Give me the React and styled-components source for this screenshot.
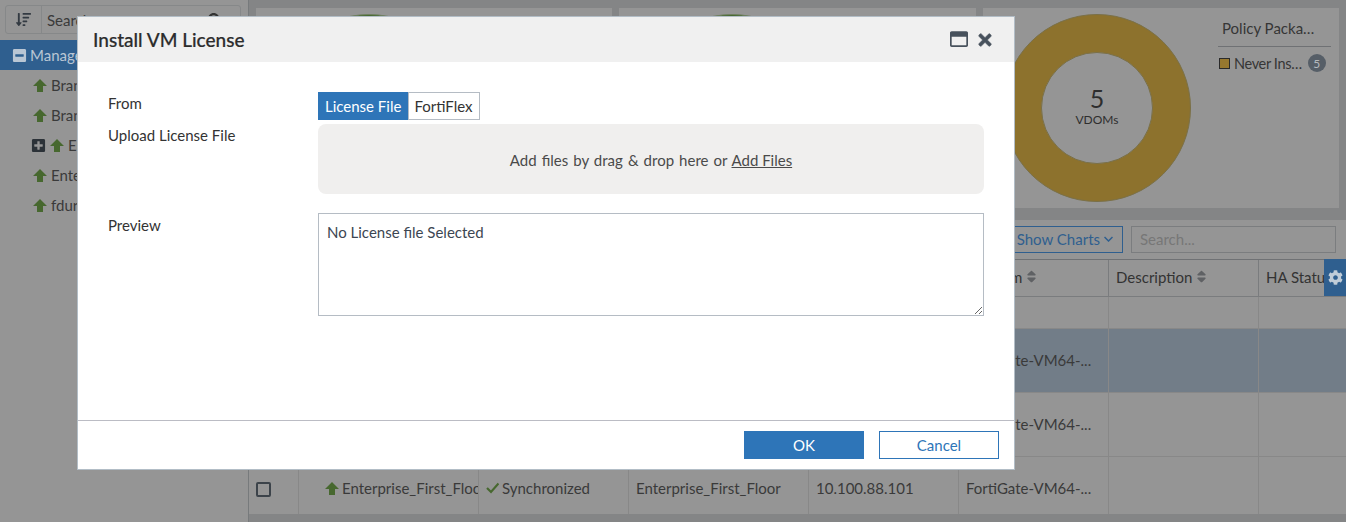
import React from 'react';
import styled, { createGlobalStyle } from 'styled-components';
import {
    FaCog, FaMinusSquare, FaPlusSquare, FaRegWindowMaximize,
    FaSearch, FaSort, FaSortAmountDown, FaTimes,
} from 'react-icons/fa';

const GlobalStyle = createGlobalStyle`
    html, body { margin: 0; height: 100%; overflow: hidden; }
    body { font-family: Lato, "Noto Sans", sans-serif; font-size: 15px; color: #333; background: #848586; }
    * { box-sizing: border-box; }
`;

const Page = styled.div`
    position: relative;
    width: 1346px;
    height: 522px;
    overflow: hidden;
    display: grid;
    grid-template-columns: 248px 1fr;
    background: #848586;
`;

const Sidebar = styled.aside`
    background: #959595;
    border-right: 1px solid #777a7c;
    width: 249px;
    padding-top: 5px;
`;

const SearchBar = styled.div`
    display: flex;
    height: 29px;
    margin: 0 7px 6px 5px;
    border: 1px solid #868889;
    border-radius: 3px;
`;

const SortButton = styled.div`
    width: 36px;
    display: flex;
    align-items: center;
    justify-content: center;
    border-right: 1px solid #868889;
    color: #333a42;
    font-size: 15px;
`;

const SearchInput = styled.div`
    flex: 1;
    display: flex;
    align-items: center;
    justify-content: space-between;
    padding: 0 18px 0 5px;
    color: #3a3a3a;
    svg { font-size: 14px; color: #333; }
`;

const TreeRow = styled.div`
    height: 30px;
    display: flex;
    align-items: center;
    gap: 4px;
    white-space: nowrap;
    padding-left: ${(p) => p.$indent}px;
    background: ${(p) => (p.$selected ? '#2f5f8f' : 'transparent')};
    color: ${(p) => (p.$selected ? '#b9c6d4' : '#3a3a3a')};
`;

const ArrowSvg = styled.svg`
    flex: none;
    fill: #47682f;
`;

const Toggle = styled.span`
    display: flex;
    font-size: 15px;
    margin-right: ${(p) => (p.$light ? -1 : 0)}px;
    color: ${(p) => (p.$light ? '#b9c6d4' : '#2c3238')};
`;

const Main = styled.main`
    display: flex;
    flex-direction: column;
    min-width: 0;
    padding-left: 1px;
`;

const Charts = styled.div`
    display: grid;
    grid-template-columns: 356px 357px 356px;
    gap: 7px;
    height: 208px;
    padding: 8px 0 0 7px;
`;

const ChartCard = styled.section`
    position: relative;
    background: #959595;
    overflow: hidden;
`;

const Donut = styled.div`
    position: absolute;
    left: ${(p) => p.$center - 94}px;
    top: 6px;
    width: 188px;
    height: 188px;
    border-radius: 50%;
    background: ${(p) => p.$color};
    border: 1px solid ${(p) => p.$edge};
`;

const DonutHole = styled.div`
    position: absolute;
    left: 37px;
    top: 37px;
    width: 112px;
    height: 112px;
    padding-bottom: 7px;
    border-radius: 50%;
    background: #959595;
    border: 1px solid #7a7048;
    display: flex;
    flex-direction: column;
    align-items: center;
    justify-content: center;
    color: #2e2e2e;
`;

const DonutValue = styled.div`
    font-size: 25px;
    line-height: 30px;
`;

const DonutLabel = styled.div`
    font-size: 12px;
    line-height: 14px;
`;

const Legend = styled.div`
    position: absolute;
    left: 235px;
    top: 8px;
    width: 113px;
`;

const LegendTitle = styled.div`
    height: 31px;
    padding-left: 4px;
    line-height: 24px;
    border-bottom: 1px solid #6f7174;
    color: #363636;
    white-space: nowrap;
`;

const LegendRow = styled.div`
    display: flex;
    align-items: center;
    height: 32px;
    padding-left: 1px;
    font-size: 14.5px;
    letter-spacing: -0.35px;
    color: #363636;
    white-space: nowrap;
`;

const Swatch = styled.span`
    width: 11px;
    height: 11px;
    margin-right: 4px;
    background: #97782f;
    border: 1px solid #2a2a2a;
`;

const Badge = styled.span`
    width: 18px;
    height: 18px;
    margin-left: 6px;
    border-radius: 50%;
    background: #565e67;
    color: #b5b9bd;
    font-size: 12px;
    display: flex;
    align-items: center;
    justify-content: center;
`;

const Toolbar = styled.div`
    display: flex;
    justify-content: flex-end;
    align-items: center;
    gap: 8px;
    height: 39px;
    margin-top: 12px;
    padding: 0 10px 1px 0;
    background: #959595;
`;

const ChartsButton = styled.div`
    display: flex;
    align-items: center;
    gap: 4px;
    height: 27px;
    padding: 0 9px 0 80px;
    border: 1px solid #2f5f8f;
    color: #2f5f8f;
`;

const Chevron = styled.svg`
    flex: none;
    fill: none;
    stroke: #2f5f8f;
    stroke-width: 1.5;
`;

const ToolbarSearch = styled.div`
    width: 205px;
    height: 27px;
    padding: 0 8px;
    line-height: 24px;
    border: 1px solid #7b7d7f;
    color: #777;
`;

const TableWrap = styled.div`
    position: relative;
    height: 255px;
    overflow: hidden;
`;

const Row = styled.div`
    display: grid;
    grid-template-columns: 50px 180px 150px 180px 150px 150px 150px 150px;
    height: ${(p) => p.$height}px;
    background: ${(p) => (p.$selected ? '#727d88' : '#959595')};
    border-bottom: 1px solid ${(p) => (p.$head ? '#7a7c7e' : '#888')};
    border-top: ${(p) => (p.$head ? '1px solid #6f7174' : '0')};
`;

const Cell = styled.div`
    display: flex;
    align-items: center;
    gap: 3px;
    min-width: 0;
    overflow: hidden;
    white-space: nowrap;
    padding-left: ${(p) => p.$pad ?? 7}px;
    padding-bottom: ${(p) => (p.$head ? 3 : 1)}px;
    border-right: 1px solid ${(p) => (p.$head ? '#7a7c7e' : '#888')};
    color: ${(p) => (p.$head ? '#333' : '#3a3a3a')};
`;

const SortCaret = styled(FaSort)`
    margin-left: -1px;
    flex: none;
    font-size: 15px;
    color: #5f6164;
`;

const CheckBox = styled.span`
    width: 15px;
    height: 15px;
    margin-top: 3px;
    border: 2px solid #3c434a;
    border-radius: 2px;
`;

const SyncCheck = styled.svg`
    flex: none;
    fill: none;
    stroke: #47682f;
    stroke-width: 2.2;
`;

const GearButton = styled.div`
    position: absolute;
    right: 0;
    top: 0;
    width: 22px;
    height: 37px;
    background: #2f5f8f;
    color: #c0ccd8;
    display: flex;
    align-items: center;
    justify-content: center;
    font-size: 15px;
`;

const Dialog = styled.div`
    position: absolute;
    left: 77px;
    top: 16px;
    width: 938px;
    height: 454px;
    background: #fff;
    border: 1px solid #b2bdc6;
    display: flex;
    flex-direction: column;
`;

const DialogHead = styled.header`
    height: 45px;
    flex: none;
    display: flex;
    align-items: center;
    justify-content: space-between;
    padding: 0 20px 0 15px;
    background: #f0f0f0;
`;

const DialogTitle = styled.h2`
    margin: 0 0 1px;
    font-size: 19px;
    font-weight: 500;
    -webkit-text-stroke: 0.2px #2c2c2c;
    color: #2c2c2c;
`;

const DialogTools = styled.div`
    display: flex;
    align-items: center;
    gap: 8px;
    color: #47515c;
    font-size: 18px;
    svg:first-child { margin-bottom: 1px; }
    svg:last-child { font-size: 18px; stroke: currentColor; stroke-width: 20; }
`;

const DialogBody = styled.div`
    flex: 1;
    display: grid;
    grid-template-columns: 210px 666px;
    grid-auto-rows: min-content;
    padding: 30px 0 0 30px;
`;

const Label = styled.label`
    line-height: 22px;
    color: #333;
`;

const PreviewLabel = styled(Label)`
    padding-top: 1px;
`;

const Segmented = styled.div`
    display: flex;
    height: 28px;
    margin-bottom: 4px;
`;

const Segment = styled.div`
    padding: ${(p) => (p.$active ? '0 6px' : '0 6px 0 5px')};
    line-height: 26px;
    background: ${(p) => (p.$active ? '#2e75b8' : '#fff')};
    color: ${(p) => (p.$active ? '#fff' : '#333')};
    border: 1px solid ${(p) => (p.$active ? '#2e75b8' : '#b5bcc4')};
`;

const DropZone = styled.div`
    height: 70px;
    margin-bottom: 19px;
    padding-top: 2px;
    border-radius: 8px;
    background: #f0efee;
    color: #4a4a4a;
    display: flex;
    align-items: center;
    justify-content: center;
    gap: 4px;
`;

const DropHint = styled.span`
    word-spacing: 1.2px;
`;

const AddFiles = styled.span`
    text-decoration: underline;
`;

const Preview = styled.textarea`
    display: block;
    width: 666px;
    height: 103px;
    padding: 9px 8px;
    border: 1px solid #b5bcc4;
    border-radius: 0;
    outline: none;
    font: inherit;
    color: #3c4652;
`;

const DialogFoot = styled.footer`
    height: 49px;
    flex: none;
    display: flex;
    justify-content: flex-end;
    align-items: center;
    gap: 15px;
    padding-right: 15px;
    border-top: 1px solid #bbbcc4;
`;

const FootButton = styled.button`
    width: 120px;
    height: 28px;
    padding: 0;
    font: inherit;
    border: 1px solid #2e75b8;
    background: ${(p) => (p.$primary ? '#2e75b8' : '#fff')};
    color: ${(p) => (p.$primary ? '#fff' : '#2e75b8')};
`;

const treeItems = [
    { label: 'Branch_Floor_1', indent: 33 },
    { label: 'Branch_Floor_2', indent: 33 },
    { label: 'Enterprise', indent: 31, expandable: true },
    { label: 'Enterprise_First_Floor', indent: 33 },
    { label: 'fdurand', indent: 33 },
];

const columns = ['', 'Device Name', 'Config Status', 'Hostname', 'IP Address', 'Platform', 'Description', 'HA Status'];

const rows = [
    { height: 64, selected: true, name: 'Branch_Floor_1', ip: '10.100.88.102' },
    { height: 64, name: 'Branch_Floor_2', ip: '10.100.88.103' },
    { height: 64, name: 'Enterprise_First_Floor', ip: '10.100.88.101' },
];

const UpArrow = () => (
    <ArrowSvg width="14" height="13" viewBox="0 0 14 13">
        <polygon points="7,0 14,7 10,7 10,13 4,13 4,7 0,7" />
    </ArrowSvg>
);

const DeviceRow = ({ row }) => (
    <Row $height={row.height} $selected={row.selected}>
        <Cell $pad={7}><CheckBox /></Cell>
        <Cell $pad={26}>
            <UpArrow />
            {row.name}
        </Cell>
        <Cell $pad={7}>
            <SyncCheck width="13" height="12" viewBox="0 0 13 12">
                <path d="M1 6 5 10 12.5 1.5" />
            </SyncCheck>
            Synchronized
        </Cell>
        <Cell>{row.name}</Cell>
        <Cell>{row.ip}</Cell>
        <Cell>FortiGate-VM64-...</Cell>
        <Cell />
        <Cell />
    </Row>
);

export default function App() {
    return (
        <Page>
            <GlobalStyle />
            <Sidebar>
                <SearchBar>
                    <SortButton><FaSortAmountDown /></SortButton>
                    <SearchInput>
                        Search
                        <FaSearch />
                    </SearchInput>
                </SearchBar>
                <TreeRow $selected $indent={12}>
                    <Toggle $light><FaMinusSquare /></Toggle>
                    Managed FortiGates
                </TreeRow>
                {treeItems.map((item) => (
                    <TreeRow key={item.label} $indent={item.indent}>
                        {item.expandable && <Toggle><FaPlusSquare /></Toggle>}
                        <UpArrow />
                        {item.label}
                    </TreeRow>
                ))}
            </Sidebar>
            <Main>
                <Charts>
                    <ChartCard>
                        <Donut $center={113} $color="#47682f" $edge="#6f8060" />
                    </ChartCard>
                    <ChartCard>
                        <Donut $center={113} $color="#47682f" $edge="#6f8060" />
                    </ChartCard>
                    <ChartCard>
                        <Donut $center={114} $color="#8d722d" $edge="#7a7048">
                            <DonutHole>
                                <DonutValue>5</DonutValue>
                                <DonutLabel>VDOMs</DonutLabel>
                            </DonutHole>
                        </Donut>
                        <Legend>
                            <LegendTitle>Policy Packa…</LegendTitle>
                            <LegendRow>
                                <Swatch />
                                Never Ins…
                                <Badge>5</Badge>
                            </LegendRow>
                        </Legend>
                    </ChartCard>
                </Charts>
                <Toolbar>
                    <ChartsButton>
                        Show Charts
                        <Chevron width="9" height="6" viewBox="0 0 9 6">
                            <path d="M.5 1 4.5 5 8.5 1" />
                        </Chevron>
                    </ChartsButton>
                    <ToolbarSearch>Search...</ToolbarSearch>
                </Toolbar>
                <TableWrap>
                    <Row $head $height={38}>
                        {columns.map((col) => (
                            <Cell $head key={col}>
                                {col}
                                {col && <SortCaret />}
                            </Cell>
                        ))}
                    </Row>
                    <Row $height={32}>
                        {columns.map((col) => <Cell key={col} />)}
                    </Row>
                    {rows.map((row) => <DeviceRow key={row.name} row={row} />)}
                    <GearButton><FaCog /></GearButton>
                </TableWrap>
            </Main>
            <Dialog>
                <DialogHead>
                    <DialogTitle>Install VM License</DialogTitle>
                    <DialogTools>
                        <FaRegWindowMaximize />
                        <FaTimes />
                    </DialogTools>
                </DialogHead>
                <DialogBody>
                    <Label>From</Label>
                    <Segmented>
                        <Segment $active>License File</Segment>
                        <Segment>FortiFlex</Segment>
                    </Segmented>
                    <Label>Upload License File</Label>
                    <DropZone>
                        <DropHint>Add files by drag &amp; drop here or</DropHint>
                        <AddFiles>Add Files</AddFiles>
                    </DropZone>
                    <PreviewLabel>Preview</PreviewLabel>
                    <Preview readOnly value="No License file Selected" />
                </DialogBody>
                <DialogFoot>
                    <FootButton $primary>OK</FootButton>
                    <FootButton>Cancel</FootButton>
                </DialogFoot>
            </Dialog>
        </Page>
    );
}
